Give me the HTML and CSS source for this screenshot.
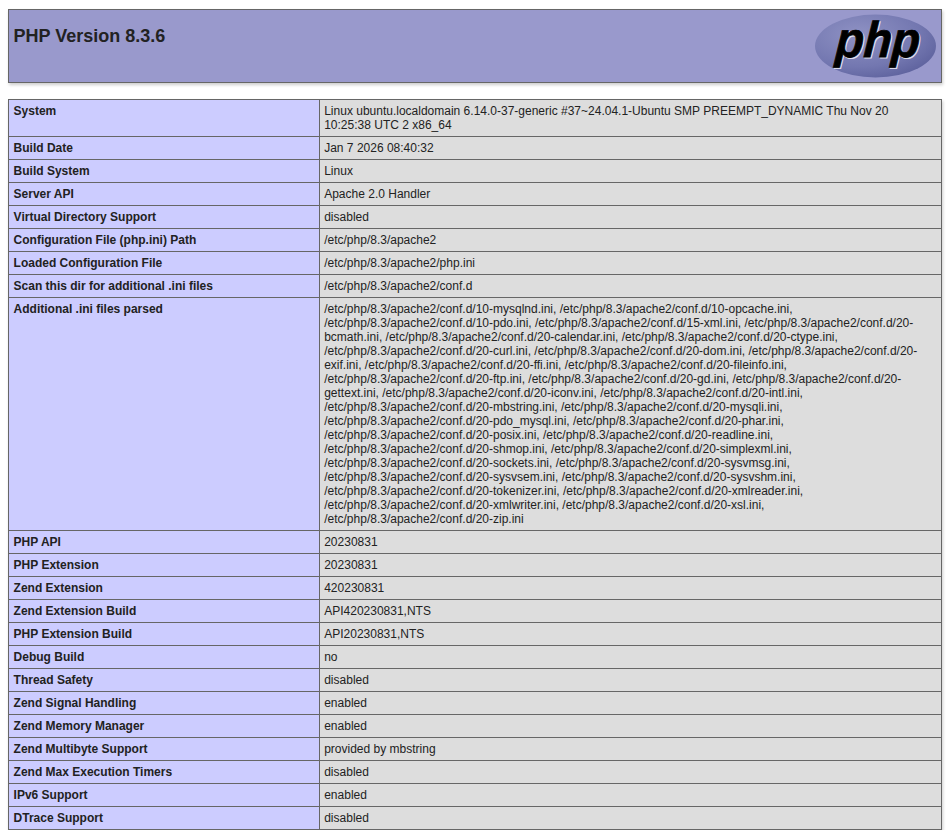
FILE: index.html
```html
<!DOCTYPE html>
<html lang="en">
<head>
<meta charset="utf-8">
<title>PHP 8.3.6 - phpinfo()</title>
<link rel="stylesheet" href="styles.css">
</head>
<body>
<div class="center">
<table class="head-table">
<tr class="h"><td>
<a class="logo-link" href="#"><svg class="logo" width="121" height="64" viewBox="0 0 121 64" role="img" aria-label="PHP logo">
<defs>
<radialGradient id="oval" cx="0.36" cy="0.32" r="0.85">
<stop offset="0" stop-color="#8f92c4"/>
<stop offset="0.6" stop-color="#7377b0"/>
<stop offset="1" stop-color="#555996"/>
</radialGradient>
</defs>
<ellipse cx="60.5" cy="32" rx="60.5" ry="31.5" fill="url(#oval)"/>
<g class="logo-slant">
<text class="logo-word logo-shadow" x="21" y="43.8" textLength="84" lengthAdjust="spacingAndGlyphs">php</text>
<text class="logo-word" x="20" y="43" textLength="84" lengthAdjust="spacingAndGlyphs">php</text>
</g>
</svg></a>
<h1 class="p">PHP Version 8.3.6</h1>
</td></tr>
</table>
<table class="info-table">
<tr><td class="e">System </td><td class="v">Linux ubuntu.localdomain 6.14.0-37-generic #37~24.04.1-Ubuntu SMP PREEMPT_DYNAMIC Thu Nov 20 10:25:38 UTC 2 x86_64 </td></tr>
<tr><td class="e">Build Date </td><td class="v">Jan 7 2026 08:40:32 </td></tr>
<tr><td class="e">Build System </td><td class="v">Linux </td></tr>
<tr><td class="e">Server API </td><td class="v">Apache 2.0 Handler </td></tr>
<tr><td class="e">Virtual Directory Support </td><td class="v">disabled </td></tr>
<tr><td class="e">Configuration File (php.ini) Path </td><td class="v">/etc/php/8.3/apache2 </td></tr>
<tr><td class="e">Loaded Configuration File </td><td class="v">/etc/php/8.3/apache2/php.ini </td></tr>
<tr><td class="e">Scan this dir for additional .ini files </td><td class="v">/etc/php/8.3/apache2/conf.d </td></tr>
<tr><td class="e">Additional .ini files parsed </td><td class="v">/etc/php/8.3/apache2/conf.d/10-mysqlnd.ini, /etc/php/8.3/apache2/conf.d/10-opcache.ini, /etc/php/8.3/apache2/conf.d/10-pdo.ini, /etc/php/8.3/apache2/conf.d/15-xml.ini, /etc/php/8.3/apache2/conf.d/20-bcmath.ini, /etc/php/8.3/apache2/conf.d/20-calendar.ini, /etc/php/8.3/apache2/conf.d/20-ctype.ini, /etc/php/8.3/apache2/conf.d/20-curl.ini, /etc/php/8.3/apache2/conf.d/20-dom.ini, /etc/php/8.3/apache2/conf.d/20-exif.ini, /etc/php/8.3/apache2/conf.d/20-ffi.ini, /etc/php/8.3/apache2/conf.d/20-fileinfo.ini, /etc/php/8.3/apache2/conf.d/20-ftp.ini, /etc/php/8.3/apache2/conf.d/20-gd.ini, /etc/php/8.3/apache2/conf.d/20-gettext.ini, /etc/php/8.3/apache2/conf.d/20-iconv.ini, /etc/php/8.3/apache2/conf.d/20-intl.ini, /etc/php/8.3/apache2/conf.d/20-mbstring.ini, /etc/php/8.3/apache2/conf.d/20-mysqli.ini, /etc/php/8.3/apache2/conf.d/20-pdo_mysql.ini, /etc/php/8.3/apache2/conf.d/20-phar.ini, /etc/php/8.3/apache2/conf.d/20-posix.ini, /etc/php/8.3/apache2/conf.d/20-readline.ini, /etc/php/8.3/apache2/conf.d/20-shmop.ini, /etc/php/8.3/apache2/conf.d/20-simplexml.ini, /etc/php/8.3/apache2/conf.d/20-sockets.ini, /etc/php/8.3/apache2/conf.d/20-sysvmsg.ini, /etc/php/8.3/apache2/conf.d/20-sysvsem.ini, /etc/php/8.3/apache2/conf.d/20-sysvshm.ini, /etc/php/8.3/apache2/conf.d/20-tokenizer.ini, /etc/php/8.3/apache2/conf.d/20-xmlreader.ini, /etc/php/8.3/apache2/conf.d/20-xmlwriter.ini, /etc/php/8.3/apache2/conf.d/20-xsl.ini, /etc/php/8.3/apache2/conf.d/20-zip.ini </td></tr>
<tr><td class="e">PHP API </td><td class="v">20230831 </td></tr>
<tr><td class="e">PHP Extension </td><td class="v">20230831 </td></tr>
<tr><td class="e">Zend Extension </td><td class="v">420230831 </td></tr>
<tr><td class="e">Zend Extension Build </td><td class="v">API420230831,NTS </td></tr>
<tr><td class="e">PHP Extension Build </td><td class="v">API20230831,NTS </td></tr>
<tr><td class="e">Debug Build </td><td class="v">no </td></tr>
<tr><td class="e">Thread Safety </td><td class="v">disabled </td></tr>
<tr><td class="e">Zend Signal Handling </td><td class="v">enabled </td></tr>
<tr><td class="e">Zend Memory Manager </td><td class="v">enabled </td></tr>
<tr><td class="e">Zend Multibyte Support </td><td class="v">provided by mbstring </td></tr>
<tr><td class="e">Zend Max Execution Timers </td><td class="v">disabled </td></tr>
<tr><td class="e">IPv6 Support </td><td class="v">enabled </td></tr>
<tr><td class="e">DTrace Support </td><td class="v">disabled </td></tr>
</table>
</div>
</body>
</html>
```
FILE: styles.css
```css
html {
  overflow: hidden;
  height: 830px;
}
body {
  margin: 0;
  padding: 9px 8px 0;
  background-color: #fff;
  color: #222;
  font-family: "Liberation Sans", Arial, sans-serif;
  height: 830px;
  box-sizing: border-box;
  overflow: hidden;
}
table {
  border-collapse: collapse;
  border: 0;
  width: 934px;
  box-shadow: 1px 2px 3px rgba(0, 0, 0, .2);
}
.head-table {
  margin: 0 0 16px;
}
.info-table {
  margin: 0;
}
td {
  border: 1px solid #666;
  font-size: 12px;
  vertical-align: baseline;
  padding: 4px 5px 4px 4.6px;
}
.h {
  background-color: #99c;
  font-weight: bold;
}
.e {
  background-color: #ccf;
  width: 300px;
  font-weight: bold;
}
.v {
  background-color: #ddd;
  max-width: 300px;
  overflow-x: auto;
  word-wrap: break-word;
}
h1 {
  font-size: 18px;
  margin: 12px 0;
}
.p {
  text-align: left;
}
.logo-link {
  float: right;
}
.logo {
  display: block;
  overflow: visible;
}
.logo-slant {
  transform: skewX(-4deg);
  transform-origin: 60px 43px;
}
.logo-word {
  font-family: "Liberation Sans", sans-serif;
  font-weight: bold;
  font-style: italic;
  font-size: 50px;
  fill: #000;
  stroke: #000;
  stroke-width: .9px;
}
.logo-shadow {
  fill: #fff;
  stroke: #fff;
  stroke-width: 1.2px;
  opacity: .75;
}
```
